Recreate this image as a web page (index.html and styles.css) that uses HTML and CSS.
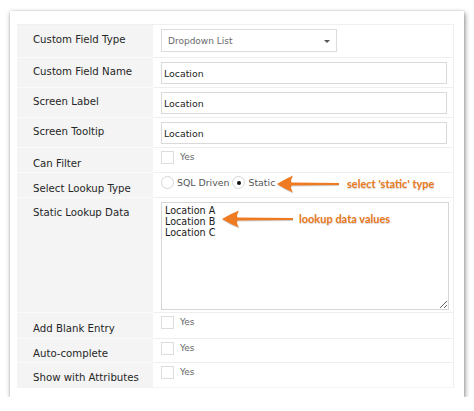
FILE: index.html
```html
<!DOCTYPE html>
<html>
<head>
<meta charset="utf-8">
<link rel="stylesheet" href="styles.css">
</head>
<body>
<div class="card">
  <div class="form">
    <div class="lbl r1">Custom Field Type</div>
    <div class="val r1"><div class="select"><span>Dropdown List</span><span class="caret"></span></div></div>

    <div class="lbl r2">Custom Field Name</div>
    <div class="val r2"><input class="text" type="text" value="Location"></div>

    <div class="lbl r2">Screen Label</div>
    <div class="val r2"><input class="text" type="text" value="Location"></div>

    <div class="lbl r2">Screen Tooltip</div>
    <div class="val r2"><input class="text" type="text" value="Location"></div>

    <div class="lbl r5">Can Filter</div>
    <div class="val r5 opt"><span class="check"></span><span class="optlabel">Yes</span></div>

    <div class="lbl r5">Select Lookup Type</div>
    <div class="val r5 opt radios"><span class="radio"></span><span class="rlabel">SQL Driven</span><span class="radio on"></span><span class="rlabel">Static</span></div>

    <div class="lbl r7">Static Lookup Data</div>
    <div class="val r7"><textarea class="area">Location A
Location B
Location C</textarea></div>

    <div class="lbl r8">Add Blank Entry</div>
    <div class="val r8 opt"><span class="check"></span><span class="optlabel">Yes</span></div>

    <div class="lbl r9">Auto-complete</div>
    <div class="val r9 opt"><span class="check"></span><span class="optlabel">Yes</span></div>

    <div class="lbl r10 last">Show with Attributes</div>
    <div class="val r10 opt last"><span class="check"></span><span class="optlabel">Yes</span></div>
  </div>

  <svg class="arrow arrow1" width="62" height="18" viewBox="0 0 62 18"><path d="M0,9 Q8,4 16,0.5 Q13,5.5 14.5,7.6 L62,7.9 L62,9.9 L14.5,10.4 Q13,12.5 16,17.5 Q8,14 0,9 Z"/></svg>
  <div class="note note1">select 'static' type</div>

  <svg class="arrow arrow2" width="71" height="18" viewBox="0 0 71 18"><path d="M0,9 Q8,4 17,0.5 Q14,5.5 15.5,7.6 L71,7.9 L71,9.9 L15.5,10.4 Q14,12.5 17,17.5 Q8,14 0,9 Z"/></svg>
  <div class="note note2">lookup data values</div>
</div>
</body>
</html>
```

FILE: styles.css
```css
html, body {
  margin: 0;
  padding: 0;
  background: #ffffff;
}

.card {
  position: relative;
  box-sizing: border-box;
  width: 454px;
  height: 386px;
  margin: 11px 0 0 10px;
  padding: 14px 10px 9px 7px;
  background: #ffffff;
  box-shadow: 1px 2px 5px rgba(0, 0, 0, 0.45), 0 0 2px rgba(0, 0, 0, 0.12);
}

.form {
  display: grid;
  grid-template-columns: 136px 301px;
  grid-template-rows: 33px 30px 30px 30px 25px 25px 115px 26px 24px 25px;
  border-top: 1px solid #f0f0f0;
  margin-top: -1px;
}

.lbl {
  box-sizing: border-box;
  background: #f4f4f4;
  border-bottom: 1px solid #fbfbfb;
  padding: 9px 0 0 16px;
  font-family: "DejaVu Sans", Verdana, sans-serif;
  font-size: 10.2px;
  line-height: 12px;
  color: #262626;
}

.lbl.r1 { padding-top: 9px; }
.lbl.r2 { padding-top: 8px; }
.lbl.r5, .lbl.r8 { padding-top: 10px; }

.val {
  box-sizing: border-box;
  border-bottom: 1px solid #efefef;
  border-right: 1px solid #efefef;
  padding: 4px 0 0 8px;
  font-family: "DejaVu Sans", Verdana, sans-serif;
  font-size: 9px;
  color: #555;
}

.last { border-bottom-color: #f3f3f3; }

.select {
  box-sizing: border-box;
  width: 176px;
  height: 23px;
  border: 1px solid #dcdcdc;
  display: flex;
  align-items: center;
  justify-content: space-between;
  padding: 0 6px 0 6px;
  color: #6a6a6a;
  font-size: 9px;
}

.caret {
  width: 0;
  height: 0;
  border-left: 3px solid transparent;
  border-right: 3px solid transparent;
  border-top: 3px solid #555;
  margin-top: 1px;
}

.text {
  box-sizing: border-box;
  display: block;
  width: 286px;
  height: 22px;
  margin: 0;
  border: 1px solid #d9d9d9;
  padding: 1px 2px 0 2px;
  font-family: "DejaVu Sans", Verdana, sans-serif;
  font-size: 9.4px;
  color: #222;
  background: #fff;
  outline: none;
}

.opt {
  display: flex;
  align-items: flex-start;
  padding-top: 3px;
}

.check {
  box-sizing: border-box;
  width: 13px;
  height: 13px;
  border: 1px solid #dddddd;
  background: #fff;
  flex: none;
}

.optlabel {
  margin-left: 6px;
  line-height: 12px;
  color: #666;
}

.radios { padding-top: 3px; }

.radio {
  box-sizing: border-box;
  width: 13px;
  height: 13px;
  border: 1px solid #d6d6d6;
  border-radius: 50%;
  background: #fff;
  flex: none;
  display: flex;
  align-items: center;
  justify-content: center;
}

.radio.on::after {
  content: "";
  width: 4px;
  height: 4px;
  border-radius: 50%;
  background: #111;
}

.rlabel {
  margin: 1px 3px 0 3px;
  line-height: 12px;
  color: #555;
  font-size: 9.4px;
}

.area {
  box-sizing: border-box;
  display: block;
  width: 288px;
  height: 108px;
  margin: 0;
  border: 1px solid #d6d6d6;
  padding: 2px 3px;
  font-family: "DejaVu Sans", Verdana, sans-serif;
  font-size: 9.6px;
  line-height: 11px;
  color: #1a1a1a;
  background: #fff;
  outline: none;
}

.arrow {
  position: absolute;
  fill: #ee7a22;
  filter: drop-shadow(0 1px 0.6px rgba(0, 0, 0, 0.18));
}

.arrow1 { left: 267px; top: 164px; }
.arrow2 { left: 212px; top: 199px; }

.note {
  position: absolute;
  font-family: Lato, "Open Sans", sans-serif;
  font-weight: 700;
  font-size: 11px;
  line-height: 13px;
  color: #ec7a20;
  text-shadow: 0 1px 1px rgba(0, 0, 0, 0.18);
  white-space: nowrap;
}

.note1 { left: 337px; top: 166px; }
.note2 { left: 289px; top: 201px; }
```
